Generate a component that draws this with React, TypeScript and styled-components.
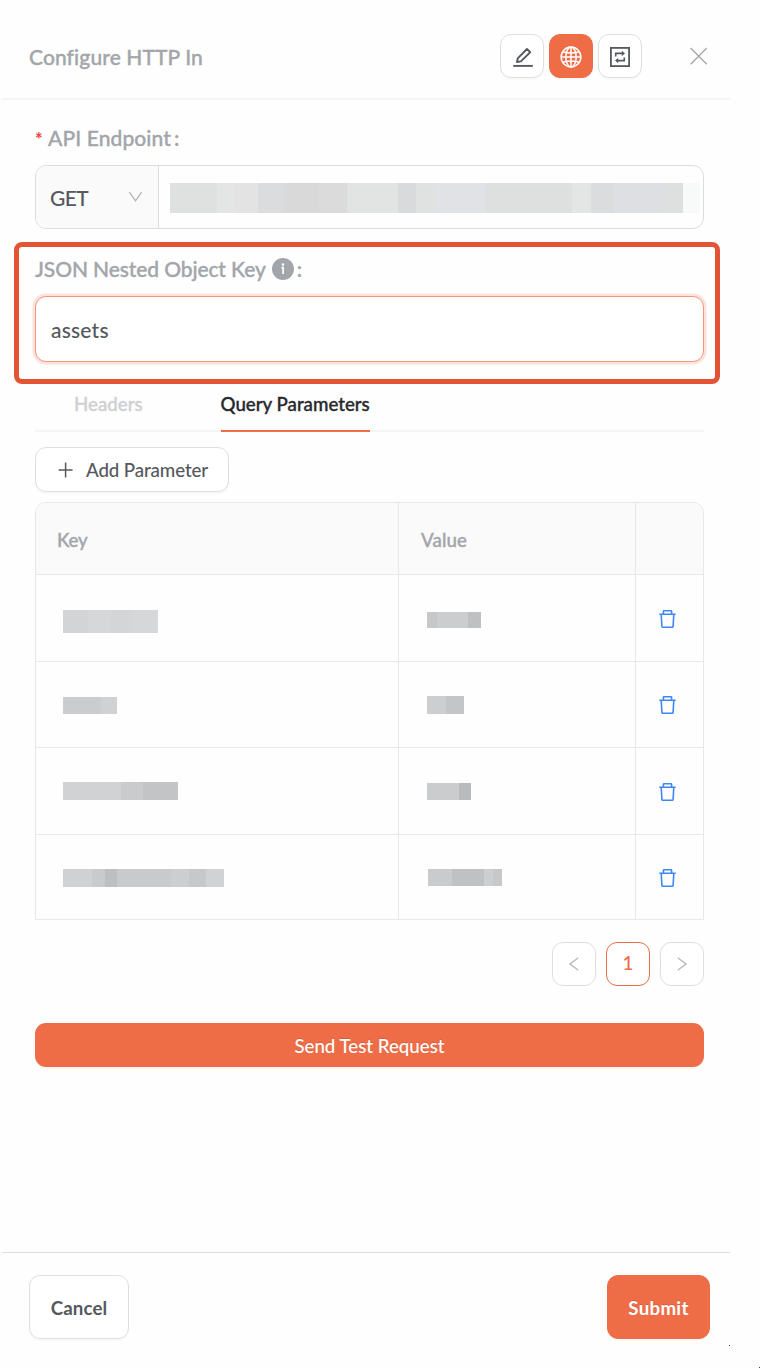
import React from 'react';
import styled, { createGlobalStyle } from 'styled-components';

const GlobalStyle = createGlobalStyle`
  *, *::before, *::after { box-sizing: border-box; }
  body { margin: 0; background: #fefefe; font-family: Lato, 'Noto Sans', sans-serif; }
  button, input { font-family: inherit; margin: 0; }
  svg { display: block; flex: none; }
`;

const orange = '#ee6d47';
const line = '#e8e8e8';
const grey = '#a2a5a9';
const ink = '#55585d';

const Page = styled.div`
  position: relative;
  width: 760px;
  height: 1368px;
  padding-left: 2px;
  overflow: hidden;
`;
const Drawer = styled.div`
  width: 728px;
  height: 1368px;
  display: flex;
  flex-direction: column;
`;
const Header = styled.header`
  height: 100px;
  padding: 14px 22px 0 27px;
  border-bottom: 2px solid #f5f5f5;
  display: flex;
  align-items: center;
`;
const Text = styled.span<{ $size?: number; $weight?: number; $color?: string; $track?: number }>`
  font-size: ${p => p.$size ?? 18.7}px;
  font-weight: ${p => p.$weight ?? 500};
  color: ${p => p.$color ?? grey};
  letter-spacing: ${p => p.$track ?? 0}px;
  line-height: 24px;
  white-space: nowrap;
  -webkit-text-stroke: ${p => (p.$weight ? 0 : 0.35)}px currentColor;
`;
const Title = styled(Text)`
  padding-top: 2px;
`;
const Tools = styled.div`
  margin-left: auto;
  display: flex;
  gap: 5px;
`;
const ToolButton = styled.button<{ $active?: boolean; $nudge?: number }>`
  width: 44px;
  height: 44px;
  padding: 2px 0 0 ${p => p.$nudge ?? 0}px;
  border-radius: 11px;
  border: 1px solid ${p => (p.$active ? orange : '#dfdfe0')};
  background: ${p => (p.$active ? orange : '#fff')};
  color: ${p => (p.$active ? '#fff' : ink)};
  box-shadow: 0 2px 0 rgba(0, 0, 0, 0.02);
  display: flex;
  align-items: center;
  justify-content: center;
`;
const CloseButton = styled.button`
  margin-left: 48px;
  width: 18px;
  height: 18px;
  padding: 0;
  border: 0;
  background: none;
  color: #a4a6a9;
`;
const Body = styled.main`
  flex: 1;
  padding: 0 26px 0 33px;
  display: flex;
  flex-direction: column;
`;
const EndpointLabel = styled.label`
  margin-top: 26px;
  height: 24px;
  display: flex;
  align-items: center;
`;
const Star = styled.span`
  width: 13px;
  padding-top: 2px;
  font-size: 18px;
  font-weight: 700;
  line-height: 24px;
  color: #f04438;
`;
const Colon = styled.span`
  margin-left: 3px;
  font-size: 21px;
  font-weight: 700;
  line-height: 24px;
  color: ${grey};
`;
const EndpointBox = styled.div`
  margin-top: 15px;
  height: 64px;
  border: 1px solid #dcdddd;
  border-radius: 11px;
  overflow: hidden;
  display: flex;
`;
const Method = styled.div`
  width: 123px;
  padding: 2px 15px 0 14px;
  background: #fafafa;
  border-right: 1px solid #dcdddd;
  color: #b4b6b8;
  display: flex;
  align-items: center;
  justify-content: space-between;
`;
const Url = styled.div`
  flex: 1;
  padding: 1px 0 0 11px;
  display: flex;
  align-items: center;
`;
const Highlight = styled.section`
  margin: 13px -16px 0 -21px;
  height: 142px;
  padding: 10px 11px 0 16px;
  border: 5px solid #e25434;
  border-radius: 8px;
  display: flex;
  flex-direction: column;
`;
const KeyLabel = styled.label`
  height: 24px;
  display: flex;
  align-items: center;
`;
const InfoWrap = styled.span`
  margin-left: 6px;
`;
const KeyInput = styled.input`
  margin-top: 15px;
  width: 669px;
  height: 66px;
  padding: 1px 15px 0;
  border: 1px solid #f2977b;
  border-radius: 11px;
  box-shadow: 0 0 0 2.5px #fce2da;
  outline: none;
  background: #fff;
  font-size: 21px;
  font-weight: 500;
  letter-spacing: 0.2px;
  color: ${ink};
`;
const Tabs = styled.nav`
  height: 48px;
  padding-left: 39px;
  border-bottom: 2px solid #f5f5f5;
  display: flex;
  gap: 78px;
`;
const Tab = styled.div<{ $active?: boolean }>`
  height: 48px;
  padding-top: 8px;
  border-bottom: 2px solid ${p => (p.$active ? orange : 'transparent')};
`;
const AddButton = styled.button`
  margin-top: 15px;
  width: 194px;
  height: 45px;
  padding: 1px 0 0 22px;
  border: 1px solid #dfdfe0;
  border-radius: 11px;
  background: #fff;
  box-shadow: 0 2px 0 rgba(0, 0, 0, 0.02);
  color: ${ink};
  display: flex;
  align-items: center;
  gap: 12px;
`;
const Table = styled.div`
  margin-top: 10px;
  border: 1px solid ${line};
  border-radius: 11px 11px 0 0;
  overflow: hidden;
`;
const Row = styled.div<{ $height: number; $head?: boolean }>`
  height: ${p => p.$height}px;
  background: ${p => (p.$head ? '#fafafa' : 'transparent')};
  display: grid;
  grid-template-columns: 362px 237px 68px;
  & + & { border-top: 1px solid ${line}; }
`;
const Cell = styled.div<{ $pad: number }>`
  padding-left: ${p => p.$pad}px;
  display: flex;
  align-items: center;
  & + & { border-left: 1px solid ${line}; }
`;
const HeadCell = styled(Cell)`
  padding-top: 2px;
`;
const IconCell = styled(Cell)`
  padding-top: 1px;
  color: #3f87f5;
`;
const Mask = styled.div<{ $height: number; $drop?: number }>`
  height: ${p => p.$height}px;
  margin-top: ${p => p.$drop ?? 0}px;
  display: flex;
`;
const Block = styled.i<{ $w: number; $c: string }>`
  width: ${p => p.$w}px;
  background: ${p => p.$c};
`;
const Pager = styled.div`
  margin-top: 22px;
  display: flex;
  justify-content: flex-end;
  gap: 10px;
`;
const PageButton = styled.button<{ $active?: boolean }>`
  width: 44px;
  height: 44px;
  padding: 0 0 ${p => (p.$active ? 3 : 0)}px;
  border: 1px solid ${p => (p.$active ? orange : '#dfdfe0')};
  border-radius: 11px;
  background: #fff;
  color: #b9bbbd;
  display: flex;
  align-items: center;
  justify-content: center;
`;
const SendButton = styled.button`
  margin-top: 37px;
  height: 44px;
  padding: 1px 0 0;
  border: 0;
  border-radius: 11px;
  background: ${orange};
  box-shadow: 0 2px 0 rgba(0, 0, 0, 0.03);
  text-shadow: 0 -1px 0 rgba(0, 0, 0, 0.12);
`;
const Footer = styled.footer`
  height: 116px;
  padding: 22px 20px 0 27px;
  border-top: 1px solid #dedede;
  display: flex;
  justify-content: space-between;
`;
const FooterButton = styled.button<{ $primary?: boolean }>`
  width: ${p => (p.$primary ? 103 : 100)}px;
  height: 64px;
  padding: 1px 0 0;
  border: 1px solid ${p => (p.$primary ? orange : '#dfdfe0')};
  border-radius: 11px;
  background: ${p => (p.$primary ? orange : '#fff')};
  box-shadow: 0 2px 0 rgba(0, 0, 0, 0.02);
  text-shadow: ${p => (p.$primary ? '0 -1px 0 rgba(0, 0, 0, 0.12)' : 'none')};
`;
const Speck = styled.i<{ $right: number; $bottom: number }>`
  position: absolute;
  right: ${p => p.$right}px;
  bottom: ${p => p.$bottom}px;
  width: 1px;
  height: 1px;
  background: #444;
`;

const EditIcon = () => (
  <svg width="20" height="20" viewBox="0 0 20 20" fill="none" stroke="currentColor" strokeWidth="1.9">
    <path d="M4 15 4.7 11.4 14 2 17.2 5.2 7.9 14.4Z" strokeLinejoin="round" />
    <path d="M0.2 18.9H19.8" />
  </svg>
);
const GlobeIcon = () => (
  <svg width="22" height="22" viewBox="0 0 22 22" fill="none" stroke="currentColor" strokeWidth="1.5">
    <circle cx="11" cy="11" r="9.9" />
    <ellipse cx="11" cy="11" rx="5.2" ry="9.9" />
    <path d="M11 1V21M1 11H21M2.8 5.8Q11 8.4 19.2 5.8M2.8 16.2Q11 13.6 19.2 16.2" />
  </svg>
);
const LoopIcon = () => (
  <svg width="20" height="20" viewBox="0 0 20 20" fill="none" stroke="currentColor" strokeWidth="1.8">
    <rect x="0.9" y="0.9" width="18.2" height="18.2" />
    <path d="M5.7 9.4V6.4H12.5M14.3 10.6V13.6H7.5" strokeWidth="1.6" />
    <path d="M11.8 3.8 15 6.4 11.8 9ZM8.2 11 5 13.6 8.2 16.2Z" fill="currentColor" stroke="none" />
  </svg>
);
const CloseIcon = () => (
  <svg width="18" height="18" viewBox="0 0 18 18" fill="none" stroke="currentColor" strokeWidth="1.3">
    <path d="M0.6 1 16.8 17.2M16.8 1 0.6 17.2" />
  </svg>
);
const ChevronDown = () => (
  <svg width="15" height="14" viewBox="0 0 15 14" fill="none" stroke="currentColor" strokeWidth="1.4">
    <path d="M1.4 1.2 7.5 9.8 13.6 1.2" />
  </svg>
);
const InfoIcon = () => (
  <svg width="22" height="22" viewBox="0 0 22 22">
    <circle cx="11" cy="11" r="11" fill={grey} />
    <circle cx="11" cy="6.6" r="1.3" fill="#fff" />
    <path d="M9.4 9.7H11.1V16" stroke="#fff" strokeWidth="1.7" fill="none" />
  </svg>
);
const PlusIcon = () => (
  <svg width="16" height="16" viewBox="0 0 16 16" stroke="currentColor" strokeWidth="1.5">
    <path d="M7.6 0.5V15.5M0.6 8H14.6" />
  </svg>
);
const TrashIcon = () => (
  <svg width="17" height="18" viewBox="0 0 17 18" fill="none" stroke="currentColor" strokeWidth="1.6">
    <path d="M0.3 4.3H16.7M4.4 4.3V1.4Q4.4 0.8 5 0.8H12Q12.6 0.8 12.6 1.4V4.3" />
    <path d="M2.2 4.3 2.9 16.3Q3 17.2 3.8 17.2H13.2Q14 17.2 14.1 16.3L14.8 4.3" />
  </svg>
);
const Arrow = ({ next }: { next?: boolean }) => (
  <svg width="10" height="14" viewBox="0 0 10 14" fill="none" stroke="currentColor" strokeWidth="1.4">
    <path d={next ? 'M0.6 0.8 9 7 0.6 13.2' : 'M9.4 0.8 1 7 9.4 13.2'} />
  </svg>
);

type Blocks = [number, string][];
const Redacted = ({ blocks, height, drop }: { blocks: Blocks; height: number; drop?: number }) => (
  <Mask $height={height} $drop={drop}>
    {blocks.map(([w, c], i) => <Block key={i} $w={w} $c={c} />)}
  </Mask>
);

const urlBlocks: Blocks = [
  [47, '#dfe1e0'], [18, '#e4e6e5'], [23, '#e3e3e3'], [26, '#dbdcde'], [35, '#d9d9da'], [28, '#dbdbdb'],
  [51, '#e2e4e3'], [18, '#d9dadc'], [19, '#e0e2e1'], [51, '#e1e2e5'], [86, '#dde0de'], [19, '#e4e6e5'],
  [22, '#dbdcde'], [51, '#dedfe2'], [19, '#dde0de'], [17, '#f8faf9'],
];

const rows: { h: number; key: Blocks; kh: number; kd: number; value: Blocks; vh: number; vd: number; pad: number }[] = [
  { h: 87, key: [[25, '#d3d4d6'], [23, '#d6d7d9'], [21, '#d4d5d7'], [26, '#d6d7d9']], kh: 23, kd: 6,
    value: [[10, '#c6c7c9'], [31, '#cccdcf'], [13, '#bfc0c2']], vh: 16, vd: 3, pad: 28 },
  { h: 86, key: [[38, '#cbccce'], [16, '#d0d1d3']], kh: 17, kd: 2,
    value: [[19, '#cdced0'], [18, '#c4c5c7']], vh: 18, vd: 1, pad: 28 },
  { h: 87, key: [[58, '#d1d2d4'], [22, '#cacbcd'], [35, '#c3c4c6']], kh: 18, kd: 0,
    value: [[32, '#cbccce'], [12, '#b9babc']], vh: 17, vd: 1, pad: 28 },
  { h: 85, key: [[29, '#d0d1d3'], [13, '#c9cacc'], [12, '#bebfc1'], [54, '#c9cacc'], [18, '#cdced0'], [17, '#c7c8ca'], [18, '#d1d2d4']], kh: 18, kd: 1,
    value: [[24, '#cacbcd'], [32, '#c0c1c3'], [9, '#cdced0'], [9, '#c7c8ca']], vh: 17, vd: 1, pad: 29 },
];

export default function App() {
  return (
    <Page>
      <GlobalStyle />
      <Drawer>
        <Header>
          <Title $size={21} $track={0.1}>Configure HTTP In</Title>
          <Tools>
            <ToolButton aria-label="Edit" $nudge={1}><EditIcon /></ToolButton>
            <ToolButton aria-label="Request" $active><GlobeIcon /></ToolButton>
            <ToolButton aria-label="Repeat"><LoopIcon /></ToolButton>
          </Tools>
          <CloseButton aria-label="Close"><CloseIcon /></CloseButton>
        </Header>
        <Body>
          <EndpointLabel>
            <Star>*</Star>
            <Text $size={21} $track={0.1}>API Endpoint</Text>
            <Colon>:</Colon>
          </EndpointLabel>
          <EndpointBox>
            <Method>
              <Text $size={21} $weight={500} $color={ink} $track={-0.6}>GET</Text>
              <ChevronDown />
            </Method>
            <Url><Redacted blocks={urlBlocks} height={30} /></Url>
          </EndpointBox>
          <Highlight>
            <KeyLabel>
              <Text $size={21} $track={-0.1}>JSON Nested Object Key</Text>
              <InfoWrap><InfoIcon /></InfoWrap>
              <Colon>:</Colon>
            </KeyLabel>
            <KeyInput defaultValue="assets" />
          </Highlight>
          <Tabs>
            <Tab><Text $color="#cfd0d2">Headers</Text></Tab>
            <Tab $active><Text $color="#26282c">Query Parameters</Text></Tab>
          </Tabs>
          <AddButton>
            <PlusIcon />
            <Text $weight={500} $color={ink} $track={-0.1}>Add Parameter</Text>
          </AddButton>
          <Table>
            <Row $height={71} $head>
              <HeadCell $pad={21}><Text $track={-0.2}>Key</Text></HeadCell>
              <HeadCell $pad={22}><Text $track={0.1}>Value</Text></HeadCell>
              <HeadCell $pad={0} />
            </Row>
            {rows.map((r, i) => (
              <Row key={i} $height={r.h}>
                <Cell $pad={27}><Redacted blocks={r.key} height={r.kh} drop={r.kd} /></Cell>
                <Cell $pad={r.pad}><Redacted blocks={r.value} height={r.vh} drop={r.vd} /></Cell>
                <IconCell $pad={23}><TrashIcon /></IconCell>
              </Row>
            ))}
          </Table>
          <Pager>
            <PageButton aria-label="Previous"><Arrow /></PageButton>
            <PageButton $active><Text $weight={500} $color={orange}>1</Text></PageButton>
            <PageButton aria-label="Next"><Arrow next /></PageButton>
          </Pager>
          <SendButton><Text $weight={500} $color="#fff">Send Test Request</Text></SendButton>
        </Body>
        <Footer>
          <FooterButton><Text $weight={700} $color={ink} $track={0.1}>Cancel</Text></FooterButton>
          <FooterButton $primary><Text $weight={700} $color="#fff" $track={0.3}>Submit</Text></FooterButton>
        </Footer>
      </Drawer>
      <Speck $right={30} $bottom={22} />
      <Speck $right={0} $bottom={0} />
    </Page>
  );
}
